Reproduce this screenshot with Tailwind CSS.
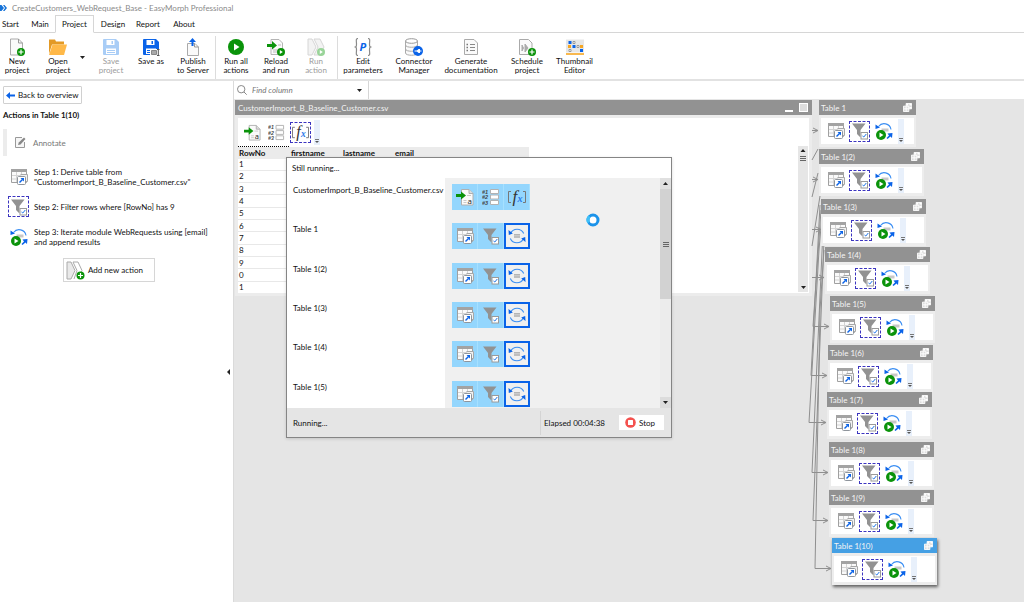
<!DOCTYPE html>
<html lang="en">
<head>
<meta charset="utf-8">
<title>CreateCustomers_WebRequest_Base - EasyMorph Professional</title>
<script src="https://cdn.jsdelivr.net/npm/@tailwindcss/browser@4"></script>
</head>
<body class="relative flex h-screen flex-col overflow-hidden bg-white font-['Lato','Open_Sans',sans-serif] text-[8px] leading-[10px] text-[#111]">

<svg class="hidden" aria-hidden="true">
  <symbol id="derive" viewBox="0 0 18 18">
    <path d="M1.500 1.500h15v13h-15z" fill="#fafafa" stroke="#a0a0a0"/>
    <path d="M1 1h16v3H1z" fill="#a3a3a3"/>
    <path d="M2 7.500h14M2 11h7M6.500 4v10M11.500 4v4" stroke="#d4d4d4" fill="none"/>
    <path d="M10.500 6.500h7v7h-2" fill="#f2f2f2" stroke="#a8a8a8"/>
    <rect x="7.500" y="8.500" width="8" height="8" rx="1" fill="#fff" stroke="#8f959c"/>
    <path d="M9.500 14.500l3-3" stroke="#0a63e8" stroke-width="1.500"/><path d="M10.500 10H14v3.500z" fill="#0a63e8"/>
  </symbol>
  <symbol id="filter" viewBox="0 0 18 18">
    <path d="M1 1.500h13.500L9.500 8v7.500L6 12V8z" fill="#929292"/>
    <rect x="10" y="10.500" width="6.500" height="6.500" fill="#fff" stroke="#9a9a9a"/>
    <path d="M11.500 14l1.300 1 2.500-3" stroke="#1a73e8" fill="none"/>
  </symbol>
  <symbol id="cycle" viewBox="0 0 18 18">
    <path d="M2.500 6.500A7.200 7.200 0 0 1 15.700 6.500M15.500 11.500A7.200 7.200 0 0 1 2.300 11.500" fill="none" stroke="#3c8ff3" stroke-width="1.100"/>
    <path d="M.5 3l4.300 3.500L.8 8zM17.500 15l-4.300-3.500 4-1.500z" fill="#0a63e8"/>
    <path d="M6 7h6v4H6z" fill="#b4b4b4"/><path d="M6 8.500h6M6 10h6" stroke="#d8d8d8" stroke-width=".6"/>
  </symbol>
  <symbol id="iterate" viewBox="0 0 18 18">
    <path d="M6.500 6.500h7v3h-7z" fill="#c8c8c8"/>
    <path d="M3.500 4.500A7 7 0 0 1 16 7.500" fill="none" stroke="#3c8ff3" stroke-width="1.100"/>
    <path d="M.5 2.500l4.500 3L.5 7zM12.500 11.500l5-.5-.5 5-1.500-1.500-3 2.500-1-1 2.500-2.500z" fill="#0a63e8"/>
    <circle cx="6" cy="13" r="5" fill="#0a930a"/><path d="M4.500 10.500v5L8.500 13z" fill="#fff"/>
  </symbol>
  <symbol id="import" viewBox="0 0 18 18">
    <path d="M5.500 1.500h7.500l4 4v11.500H5.500z" fill="#fafafa" stroke="#b0b0b0"/><path d="M13 1.500v4h4" fill="#ddd" stroke="#b0b0b0"/>
    <path d="M7.500 12.500h3M7.500 14.500h3M11 7.500h4" stroke="#cacaca"/>
    <path d="M0 6h5V3.500L10 7.500 5 11.500V9H0z" fill="#0a930a"/>
    <text x="11.500" y="16" font-size="8" font-family="Open Sans" fill="#222">a</text>
  </symbol>
  <symbol id="list" viewBox="0 0 18 18">
    <g font-size="5.500" font-style="italic" font-weight="bold" font-family="Liberation Sans" fill="#444"><text x="0" y="5.500">#1</text><text x="0" y="11.200">#2</text><text x="0" y="17">#3</text></g>
    <path d="M8.500 1.500h8v4h-8zM8.500 7h8v4h-8zM8.500 12.500h8v4h-8z" fill="#fff" stroke="#b2b2b2"/>
  </symbol>
  <symbol id="fx" viewBox="0 0 18 18">
    <path d="M3 3.500H.5v11H3M15 3.500h2.500v11H15" fill="none" stroke="#777"/>
    <text x="4.500" y="13.500" font-size="17" font-style="italic" font-family="Liberation Serif" fill="#333">f</text>
    <text x="9.500" y="14" font-size="10" font-weight="bold" font-style="italic" font-family="Liberation Serif" fill="#2a78ea">x</text>
  </symbol>
  <symbol id="copy" viewBox="0 0 10 10">
    <path d="M3.500.5h6v6h-6z" fill="#fff" stroke="#fff"/><path d="M6.500 1v5.500M4 3.500h5.500" stroke="#ccc"/>
    <path d="M.5 3.500h6v6h-6z" fill="#ddd" stroke="#fff"/><path d="M3.500 4v5.500M1 6.500h5.500" stroke="#fff"/>
  </symbol>
  <symbol id="more" viewBox="0 0 4 4"><path d="M0 .5h4" stroke="#777"/><path d="M0 2h4L2 4z" fill="#555"/></symbol>
  <symbol id="floppy" viewBox="0 0 18 18">
    <path d="M2 1h12l3 3v12a1 1 0 0 1-1 1H2a1 1 0 0 1-1-1V2a1 1 0 0 1 1-1z" fill="currentColor"/>
    <path d="M4.500 2h8v5h-8zM4 10.500h10V16H4z" fill="#fff"/><path d="M9.500 3h1.500v3H9.500zM5 12h8v1H5zM5 14h8v1H5z" fill="currentColor"/>
  </symbol>
</svg>

<header class="flex h-4 shrink-0 items-center gap-[5px] text-[#8a8a8a]">
  <svg class="h-2 w-[7px]" viewBox="0 0 7 8"><path d="M0 1h1.500L4 4 1.500 7H0zM3 1h1.500L7 4 4.500 7H3L5 4z" fill="#1673d8"/></svg>
  <h1>CreateCustomers_WebRequest_Base - EasyMorph Professional</h1>
</header>

<nav class="flex h-[17px] shrink-0 border-b border-[#d6d6d6]">
  <button class="w-[21px]">Start</button>
  <button class="ml-2 w-[22px]">Main</button>
  <button class="relative z-10 -mt-px ml-1 h-[18px] w-[39px] border border-b-white border-[#d6d6d6] bg-white">Project</button>
  <button class="ml-1 w-[30px]">Design</button>
  <button class="ml-1 w-8">Report</button>
  <button class="ml-1 w-8">About</button>
</nav>

<section class="flex h-[48px] shrink-0 items-start border-b-2 border-[#e2e2e2] pt-[5px] leading-[9px] [&>button]:flex [&>button]:flex-col [&>button]:items-center [&>button]:gap-px [&_svg]:shrink-0" aria-label="Project ribbon">
  <button class="w-[34px]"><svg class="size-[18px]" viewBox="0 0 18 18"><path d="M2.500 1h8l4 4v12h-12z" fill="#fafafa" stroke="#aaa"/><path d="M10.500 1v4h4" fill="none" stroke="#999"/><circle cx="13" cy="14" r="4" fill="#0a930a"/><path d="M13 11.500v5M10.500 14h5" stroke="#fff" stroke-width="1.200"/></svg><span>New<br>project</span></button>
  <button class="ml-1 w-10"><svg class="size-[18px]" viewBox="0 0 18 18"><path d="M0 1.500h6l1 2h8v3H3L0 16z" fill="#e39a26"/><path d="M3.500 6.500H18L15 17H0z" fill="#ffb949"/></svg><span>Open<br>project</span></button>
  <button class="w-2 pt-[18px]" aria-label="Recent projects"><svg class="h-[3px] w-[5px]" viewBox="0 0 5 3"><path d="M0 0h5L2.500 3z" fill="#222"/></svg></button>
  <button class="ml-[5px] w-10 text-[#9b9b9b]" disabled><svg class="size-[18px] text-[#a9cdf6]"><use href="#floppy"/></svg><span>Save<br>project</span></button>
  <button class="w-10"><svg class="size-[18px] text-[#0a63e8]" viewBox="0 0 18 18"><use href="#floppy"/><path d="M8 11h10v7H8z" fill="#fff"/><path d="M9.500 12.500h5v4h-5z" fill="#aaa" stroke="#888"/><path d="M15 11.500h2.500M16.300 11.500v6M15 17.500h2.500" stroke="#555"/></svg><span>Save as</span></button>
  <button class="ml-0.5 w-10"><svg class="size-[18px]" viewBox="0 0 18 18"><path d="M3.500 5.500H11l3.500 3.500v8.500h-11z" fill="#fafafa" stroke="#aaa"/><path d="M10.500 5.500V9h4" fill="none" stroke="#999"/><path d="M8.500 0L12 4H9.500v4h-2V4H5z" fill="#0a63e8"/></svg><span>Publish<br>to Server</span></button>
  <i class="-mt-[2px] ml-0.5 h-[43px] w-px bg-[#dcdcdc]"></i>
  <button class="w-10"><svg class="size-[18px]" viewBox="0 0 18 18"><circle cx="9" cy="9" r="8" fill="#0a930a"/><path d="M7 5.500v7L12.500 9z" fill="#fff"/></svg><span>Run all<br>actions</span></button>
  <button class="w-10"><svg class="size-[18px]" viewBox="0 0 18 18"><path d="M4 1.500h8l3.500 3.500v11.500H4z" fill="#fafafa" stroke="#b5b5b5"/><path d="M6 12h4M6 14h4M11 7h3" stroke="#bbb"/><path d="M0 6h5V3l5 4.500L5 11.500V9H0z" fill="#0a930a"/><circle cx="14" cy="14" r="4" fill="#0a930a"/><path d="M12.800 12v4l3-2z" fill="#fff"/></svg><span>Reload<br>and run</span></button>
  <button class="w-10 text-[#9b9b9b]" disabled><svg class="size-[18px]" viewBox="0 0 18 18"><path d="M1 1h4l4 8-4 8H1zM7 1h6l4 8-4 8H7l4-8z" fill="#f3f3f3" stroke="#d6d6d6"/><circle cx="14" cy="14" r="4" fill="#99d499"/><path d="M12.800 12v4l3-2z" fill="#fff"/></svg><span>Run<br>action</span></button>
  <i class="-mt-[2px] ml-px h-[43px] w-px bg-[#dcdcdc]"></i>
  <button class="w-[50px]"><svg class="size-[18px]" viewBox="0 0 18 18"><path d="M4 .5C1.500.5 2.500 3 2.500 6S2 9 .5 9c1.500 0 2 0 2 3s-1 5.500 1.500 5.500M14 .5c2.500 0 1.500 2.500 1.500 5.500S16 9 17.500 9c-1.500 0-2 0-2 3s1 5.500-1.500 5.500" fill="none" stroke="#8a8a8a" stroke-width="1.200"/><text x="5.500" y="13" font-size="11" font-weight="bold" font-style="italic" font-family="Open Sans" fill="#0a63e8">P</text></svg><span>Edit<br>parameters</span></button>
  <button class="w-[52px]"><svg class="size-[18px]" viewBox="0 0 18 18"><path d="M.5 3v12c0 3 12 3 12 0V3" fill="#fafafa" stroke="#aaa"/><ellipse cx="6.500" cy="3" rx="6" ry="2.300" fill="#fff" stroke="#999"/><path d="M.5 7c0 3 12 3 12 0M.5 11c0 3 12 3 12 0" fill="none" stroke="#aaa"/><circle cx="13" cy="13" r="5" fill="#0a63e8"/><path d="M9.500 13h7" stroke="#fff"/><path d="M11.500 13l2-2h1.500v4h-1.500z" fill="#fff"/></svg><span>Connector<br>Manager</span></button>
  <button class="w-[62px]"><svg class="size-[18px]" viewBox="0 0 18 18"><path d="M2.500 1.500h9.500l3.500 3.500v11.500h-13z" fill="#fafafa" stroke="#aaa"/><path d="M8 6.500h5M8 9.500h5M8 12.500h5" stroke="#888"/><path d="M4.500 6.500H6M4.500 9.500H6M4.500 12.500H6" stroke="#777" stroke-width="1.500"/></svg><span>Generate<br>documentation</span></button>
  <button class="w-[50px]"><svg class="size-[18px]" viewBox="0 0 18 18"><path d="M1.500 1.500h9l3.500 3.500v11.500H1.500z" fill="#fafafa" stroke="#aaa"/><path d="M4 7l1.500 3L4 13zM7 6l3 4-3 4z" fill="#aaa" stroke="#aaa"/><circle cx="14" cy="14" r="4" fill="#0a930a"/><path d="M14 11.500v5M11.500 14h5" stroke="#fff" stroke-width="1.200"/></svg><span>Schedule<br>project</span></button>
  <button class="w-[45px]"><svg class="size-[18px]" viewBox="0 0 18 18"><path d="M0 1.500h18v13H0z" fill="#e6e6e6"/><path d="M0 15h18v2H0z" fill="#f8b84e"/><path d="M2.500 3h3v3h-3zM6.500 7h3v3h-3zM14 11h3v3h-3z" fill="#0a63e8"/><path d="M14 7h3v3h-3zM2 7h3v3H2z" fill="#f5a623"/><path d="M7 3.500h2v2H7zM11 7.500h2v2h-2zM3 11.500h2v2H3z" fill="#fff" stroke="#888" stroke-width=".8"/></svg><span>Thumbnail<br>Editor</span></button>
</section>

<div class="flex min-h-0 flex-1">
  <aside class="relative flex w-[234px] shrink-0 flex-col items-start border-r border-[#dadada] pt-[5px] pl-[3px]">
    <button class="flex h-[18px] items-center gap-[3px] rounded-[1px] border border-[#d0d0d0] px-[2px]"><svg class="h-[7px] w-[9px]" viewBox="0 0 9 7"><path d="M0 3.500L4 0v2.500h5v2H4V7z" fill="#0a63e8"/></svg>Back to overview</button>
    <h2 class="mt-[6px] font-bold">Actions in Table 1(10)</h2>
    <button class="mt-[9px] flex h-[27px] items-center gap-[7px] border-l-4 border-[#ececec] pl-2 text-[#777]"><svg class="size-[11px]" viewBox="0 0 11 11"><path d="M7 .5H.5v10h9V5" fill="#f6f6f6" stroke="#999"/><path d="M3 8l.8-2.500L9 .5 10.500 2 5.500 7.500z" fill="#888"/></svg>Annotate</button>
    <ul class="mt-[7px] flex flex-col pl-[5px]">
      <li class="flex h-7 items-center gap-[5px]"><span class="grid size-[21px] place-items-center"><svg class="size-[18px]"><use href="#derive"/></svg></span><span>Step 1: Derive table from<br>"CustomerImport_B_Baseline_Customer.csv"</span></li>
      <li class="mt-[5px] flex h-[21px] items-center gap-[5px]"><span class="grid size-[21px] place-items-center border border-dashed border-[#3c35c0]"><svg class="size-[18px]"><use href="#filter"/></svg></span><span>Step 2: Filter rows where [RowNo] has 9</span></li>
      <li class="mt-[6px] flex h-7 items-center gap-[5px]"><span class="grid size-[21px] place-items-center"><svg class="size-[18px]"><use href="#iterate"/></svg></span><span>Step 3: Iterate module WebRequests using [email]<br>and append results</span></li>
    </ul>
    <button class="mt-[7px] ml-[60px] flex h-6 w-[92px] items-center gap-[3px] border border-[#d6d6d6] pl-[2px]"><svg class="size-[19px]" viewBox="0 0 19 19"><path d="M1 1h4l4 8.500L5 18H1z" fill="#e9e9e9" stroke="#aaa"/><path d="M7 1h5l4 8.500-2 3.500M7 1l4 8.500L8 18" fill="none" stroke="#aaa"/><circle cx="14.500" cy="14.500" r="4" fill="#0a930a"/><path d="M14.500 12v5M12 14.500h5" stroke="#fff" stroke-width="1.200"/></svg>Add new action</button>
    <button class="absolute top-[288px] right-[3px] h-[6px] w-[3px]" aria-label="Collapse panel"><svg class="h-[6px] w-[3px]" viewBox="0 0 3 6"><path d="M3 0v6L0 3z" fill="#222"/></svg></button>
  </aside>

  <main class="flex min-w-0 flex-1 flex-col">
    <div class="flex h-[18px] shrink-0 items-center">
      <label class="flex h-full w-[135px] items-center gap-[5px] border-r border-[#d6d6d6] pr-1.5 pl-[3px]">
        <svg class="size-[10px] shrink-0" viewBox="0 0 10 10"><circle cx="4.200" cy="4.200" r="3.700" fill="none" stroke="#888"/><path d="M7 7l2.700 2.700" stroke="#888"/></svg>
        <input class="h-[14px] min-w-0 flex-1 italic outline-none placeholder:text-[#777]" type="text" placeholder="Find column" aria-label="Find column">
        <svg class="h-[3px] w-[5px] shrink-0" viewBox="0 0 5 3"><path d="M0 0h5L2.500 3z" fill="#222"/></svg>
      </label>
    </div>

    <div class="relative min-h-0 flex-1 overflow-hidden bg-[#e5e5e5]">
      <section class="absolute top-px left-px flex h-[196px] w-[577px] flex-col bg-[#ececec]">
        <div class="flex h-[15px] shrink-0 items-center bg-[#929292] pr-[3px] pl-[3px] text-white"><span class="flex-1 text-[#f4f4f4]">CustomerImport_B_Baseline_Customer.csv</span>
          <button class="mr-1.5 flex h-[9px] w-2 items-end" aria-label="Minimize"><i class="h-[2px] w-full bg-white"></i></button><button class="mr-px size-[9px] border border-white bg-[#dcdcdc]" aria-label="Maximize"></button></div>
        <div class="mx-[3px] mt-[3px] mb-[3px] flex min-h-0 flex-1 flex-col overflow-hidden bg-white">
          <div class="flex h-7 shrink-0 items-center pl-[6px]">
            <svg class="size-[17px]"><use href="#import"/></svg>
            <svg class="ml-[7px] size-[17px]"><use href="#list"/></svg>
            <span class="ml-[5px] grid size-[21px] place-items-center border border-dashed border-[#3c35c0]"><svg class="size-[17px]"><use href="#fx"/></svg></span>
            <span class="ml-[3px] flex h-[25px] w-[6px] items-end justify-center bg-[#e8f0fb] pb-[2px]"><svg class="size-1"><use href="#more"/></svg></span>
          </div>
          <div class="flex min-h-0 flex-1">
            <div class="min-w-0 flex-1 overflow-hidden">
              <table class="h-[148px] w-[291px] table-fixed border-collapse text-left">
                <thead><tr class="h-[12px] bg-[#ebebeb] leading-[10px]"><th class="w-[51px] border-t border-dotted border-black p-0 pl-px">RowNo</th><th class="w-[52px] p-0 pl-[2px]">firstname</th><th class="w-[52px] p-0 pl-[2px]">lastname</th><th class="p-0 pl-[2px]">email</th></tr></thead>
                <tbody id="rows"></tbody>
              </table>
            </div>
            <div class="mr-px mb-px flex w-[10px] flex-col items-center justify-between bg-[#e6e6e6] py-[3px]">
              <svg class="h-[13px] w-[6px]" viewBox="0 0 6 13"><path d="M.5 3h5L3 0z" fill="#222"/><path d="M0 7.500h6M0 9.500h6M0 11.500h6" stroke="#666"/></svg>
              <svg class="h-[3px] w-[5px]" viewBox="0 0 5 3"><path d="M0 0h5L2.500 3z" fill="#222"/></svg>
            </div>
          </div>
        </div>
      </section>

      <svg class="absolute top-0 left-0 h-[503px] w-[790px]" viewBox="234 99 790 503" fill="none" stroke="#8f8f8f" aria-hidden="true">
        <path d="M812 130.500h6M812 179.500h6M812 229.500h9M812 277.500h12M812 160l6-11M812 197l6-24M812 246l8-50M821 210L813 326.500h16M820 205L811 375.500h16M822 215l-3 35L809 422.500h17M823 230L812 472.500h16M824 240L813 520.500h15M824 250l-4 60-5 258.500h16"/>
        <path d="M813 128l5 2.500-5 2.500M813 177l5 2.500-5 2.500M816 227l5 2.500-5 2.500M819 275l5 2.500-5 2.500M824 324l5 2.500-5 2.500M822 373l5 2.500-5 2.500M821 420l5 2.500-5 2.500M823 470l5 2.500-5 2.500M823 518l5 2.500-5 2.500M826 566l5 2.500-5 2.500"/>
      </svg>
      <div id="cards"></div>
    </div>
  </main>
</div>

<template id="card">
  <article class="absolute h-[47px] bg-[#ededed]">
    <div class="flex h-[15px] items-center justify-between bg-[#929292] pr-1 pl-[2px] text-[#f4f4f4]"><span></span><button aria-label="Duplicate table"><svg class="block size-[9px]"><use href="#copy"/></svg></button></div>
    <div class="mx-[2px] mt-[3px] flex h-[26px] items-center bg-white pl-[6px]">
      <svg class="size-[18px]"><use href="#derive"/></svg>
      <span class="ml-[4px] grid size-[21px] place-items-center border border-dashed border-[#3c35c0]"><svg class="size-[18px]"><use href="#filter"/></svg></span>
      <svg class="ml-[5px] size-[18px]"><use href="#iterate"/></svg>
      <span class="ml-[5px] flex h-[25px] w-[6px] items-end justify-center bg-[#e8f0fb] pb-[2px]"><svg class="size-1"><use href="#more"/></svg></span>
    </div>
  </article>
</template>

<div role="dialog" aria-label="Still running" class="absolute top-[157px] left-[286px] z-20 flex w-[386px] flex-col border border-[#858585] bg-white shadow-[0_1px_3px_rgba(0,0,0,0.15)]">
  <p class="flex h-5 items-center pl-[5px]">Still running...</p>
  <div class="flex h-[230px]">
    <div class="relative flex-1 overflow-hidden bg-[linear-gradient(to_right,#fff_158px,#f0f0f0_158px)] pt-1.5">
      <ul id="progress" class="grid h-[236px] grid-rows-6"></ul>
    </div>
    <div class="flex w-[11px] flex-col bg-[#ececec]">
      <button class="grid h-[11px] place-items-center bg-[#e0e0e0]" aria-label="Scroll up"><svg class="h-[3px] w-[5px]" viewBox="0 0 5 3"><path d="M0 3h5L2.500 0z" fill="#222"/></svg></button>
      <div class="grid h-[110px] place-items-center bg-[#d2d2d2]"><svg class="h-[5px] w-[6px]" viewBox="0 0 6 5"><path d="M0 .5h6M0 2.500h6M0 4.500h6" stroke="#666"/></svg></div>
      <button class="mt-auto grid h-[11px] place-items-center bg-[#dcdcdc]" aria-label="Scroll down"><svg class="h-[3px] w-[5px]" viewBox="0 0 5 3"><path d="M0 0h5L2.500 3z" fill="#222"/></svg></button>
    </div>
  </div>
  <div class="flex h-[29px] items-center bg-[#e5e5e5] pr-[7px] pl-1.5">
    <span class="flex-1">Running...</span>
    <span class="flex h-6 w-[79px] items-center border-l border-[#d4d4d4] pl-[3px]">Elapsed 00:04:38</span>
    <button class="flex h-[15px] w-[45px] items-center gap-[3px] bg-white pl-1.5"><svg class="size-[11px]" viewBox="0 0 11 11"><circle cx="5.500" cy="5.500" r="5.300" fill="#f4514e"/><rect x="3" y="3" width="5" height="5" rx=".5" fill="#fff"/></svg>Stop</button>
  </div>
  <svg class="absolute top-[55px] left-[299px] size-[14px]" viewBox="0 0 14 14" role="img" aria-label="Busy"><circle cx="7" cy="7" r="5" fill="#fff" stroke="#1c93ea" stroke-width="3"/><path d="M2.700 9.500A5 5 0 0 1 3.500 3.400" fill="none" stroke="#3fc0f7" stroke-width="3"/></svg>
</div>

<script>
  document.getElementById('rows').innerHTML = [1,2,3,4,5,6,7,8,9,0,1].map(n =>
    `<tr><td class="border-b border-[#e8e8e8] p-0 pl-px leading-[10px]">${n}</td><td colspan="3"></td></tr>`).join('');

  const icon = id => `<span class="grid size-[26px] place-items-center border-r border-[#a6e0ff] bg-[#94d6fd]"><svg class="size-[18px]"><use href="#${id}"/></svg></span>`;
  const active = '<span class="grid size-[26px] place-items-center border-2 border-[#0a63e8] bg-[#f0f0f0]"><svg class="size-[18px]"><use href="#cycle"/></svg></span>';
  const names = ['CustomerImport_B_Baseline_Customer.csv', 'Table 1', 'Table 1(2)', 'Table 1(3)', 'Table 1(4)', 'Table 1(5)'];
  document.getElementById('progress').innerHTML = names.map((name, i) =>
    `<li class="flex items-start"><span class="w-[165px] pt-px pl-1.5">${name}</span>` +
    (i ? icon('derive') + icon('filter') + active : icon('import') + icon('list') + icon('fx')) + '</li>').join('');

  const cards = [[819,100],[819,149],[821,199],[825,247],[830,296],[828,345],[827,392],[829,442],[829,490],[832,538]];
  const host = document.getElementById('cards');
  cards.forEach(([x, y], i) => {
    const card = document.getElementById('card').content.firstElementChild.cloneNode(true);
    card.style.left = x - 234 + 'px';
    card.style.top = y - 99 + 'px';
    card.style.width = (i ? 105 : 97) + 'px';
    card.querySelector('span').textContent = 'Table 1' + (i ? `(${i + 1})` : '');
    if (i === cards.length - 1) {
      card.classList.add('shadow-[1px_2px_3px_rgba(0,0,0,0.6)]');
      card.firstElementChild.classList.replace('bg-[#929292]', 'bg-[#45a0e4]');
    }
    host.append(card);
  });
</script>
</body>
</html>
